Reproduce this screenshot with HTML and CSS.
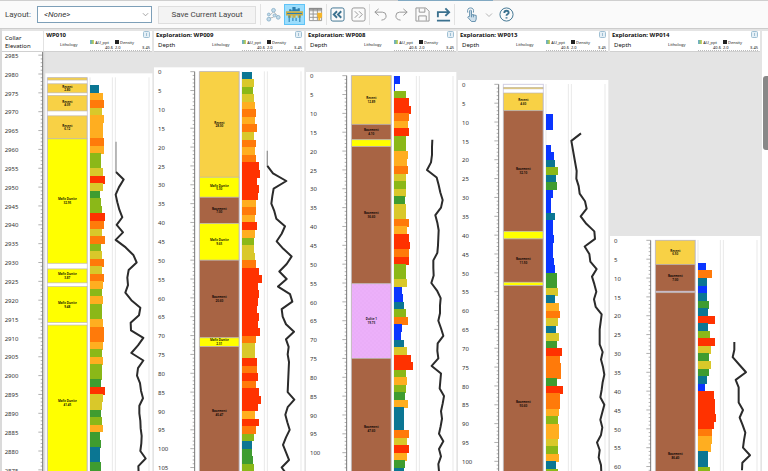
FILE: index.html
```html
<!DOCTYPE html>
<html lang="en">
<head>
<meta charset="utf-8">
<title>Drillhole Logs</title>
<link rel="stylesheet" href="styles.css">
</head>
<body>
<header class="toolbar">
  <label class="toolbar-label" for="layout">Layout:</label>
  <span class="picker">
    <select id="layout"><option>&lt;None&gt;</option></select>
    <svg class="picker-arrow" viewBox="0 0 8 5"><path d="M1 1l3 3 3-3"/></svg>
  </span>
  <button class="save-layout" type="button">Save Current Layout</button>
  <span class="rule rule-first"></span>
  <button class="tool" type="button" aria-label="Points">
    <svg viewBox="0 0 16 16"><path class="soft" d="M8 5L4 9M8 5l5 5M3 12l5-1"/><g class="dots"><circle cx="8" cy="3.500" r="2"/><circle cx="3" cy="8" r="1.500"/><circle cx="9" cy="9" r="1.500"/><circle cx="13" cy="11" r="2"/><circle cx="3" cy="13" r="2"/></g></svg>
  </button>
  <button class="tool tool-active" type="button" aria-label="Strip log">
    <svg viewBox="0 0 16 16"><path fill="#2c7fb0" d="M3 5V3h2v1h1V1h3v2h2V2h2v3z"/><path fill="#c9b04a" d="M0 5h16v4h-2v2h-3V9H9v2H6V9H5v2H2V9H0z"/><path stroke="#2c7fb0" fill="none" d="M1 7h14M3 9v6M6.500 11v3M9.500 11v3M13 9v6"/></svg>
  </button>
  <button class="tool" type="button" aria-label="Table">
    <svg viewBox="0 0 16 16"><path class="grey" d="M1.500 1.500h13v13h-13zM1.500 4h13M1.500 7.500h13M1.500 11h13M5.500 2v12M10 2v12"/><path fill="#8c8c8c" d="M1 1h14v2H1z"/><path fill="#f5b52a" d="M10 6h5v5l-2 1v2h-2v-2l-1-2z"/></svg>
  </button>
  <span class="rule"></span>
  <button class="tool" type="button" aria-label="Previous">
    <svg viewBox="0 0 16 16"><rect class="blue" x="1" y="1" width="14" height="14" rx="2"/><path class="blue bold" d="M7.500 4.500L4 8l3.500 3.500M12 4.500L8.500 8l3.500 3.500"/></svg>
  </button>
  <button class="tool" type="button" aria-label="Next">
    <svg viewBox="0 0 16 16"><rect class="grey" x="1" y="1" width="14" height="14" rx="2"/><path class="grey" d="M4 4.500L7.500 8 4 11.500M8.500 4.500L12 8l-3.500 3.500"/></svg>
  </button>
  <span class="rule"></span>
  <button class="tool" type="button" aria-label="Undo">
    <svg viewBox="0 0 16 16"><path class="grey" d="M6 2L2 5.500 6 9M2 5.500h8q4 0 4 4t-5 4.500"/></svg>
  </button>
  <button class="tool" type="button" aria-label="Redo">
    <svg viewBox="0 0 16 16"><path class="grey" d="M10 2l4 3.500L10 9M14 5.500H6q-4 0-4 4T7 14"/></svg>
  </button>
  <button class="tool" type="button" aria-label="Save">
    <svg viewBox="0 0 16 16"><path class="grey" d="M1 1h10.500L15 4.500V15H1zM4.500 1.500v4h6v-4M4 14.500v-5h8v5"/></svg>
  </button>
  <button class="tool" type="button" aria-label="Export">
    <svg viewBox="0 0 16 16"><path class="blue bold" d="M1 14.500h14M2 11V5.500h12M10 1.500l4 4-4 4"/></svg>
  </button>
  <span class="rule"></span>
  <button class="tool tool-hand" type="button" aria-label="Touch">
    <svg viewBox="0 0 16 16"><path fill="#cfe0ec" stroke="#5f8dab" d="M6 10V4q1-2 2 0v4l5 1v4l-1 2.500H8L4 11q0-1 2-1z"/><path stroke="#5f8dab" fill="none" d="M4 6q-1-5 3-5t3 5M10 8v3M8 8v3"/></svg>
  </button>
  <button class="tool tool-small" type="button" aria-label="More">
    <svg viewBox="0 0 8 8"><path class="soft" d="M1 2.500l3 3 3-3"/></svg>
  </button>
  <button class="tool" type="button" aria-label="Help">
    <svg viewBox="0 0 16 16"><circle class="blue" cx="8" cy="8" r="7"/><path class="blue bold" d="M5.700 6.300q0-2.300 2.300-2.300t2.300 2q0 1-1.300 1.700-1 .6-1 1.600M8 11v1.200"/></svg>
  </button>
  <span class="dock-edge"></span>
</header>
<main class="workspace">
  <div class="logs" id="logs"></div>
  <div class="scrollbar"><div class="thumb"></div></div>
</main>
<script src="logs.js"></script>
</body>
</html>
```
FILE: styles.css
```css
* { box-sizing: border-box; }

body {
  margin: 0;
  height: 100vh;
  display: flex;
  flex-direction: column;
  overflow: hidden;
  background: #e4e4e4;
  color: #333;
  font-family: "Noto Sans", "Open Sans", sans-serif;
}

button { margin: 0; padding: 0; font: inherit; color: inherit; }

.toolbar {
  position: relative;
  flex: none;
  display: flex;
  align-items: center;
  height: 29px;
  padding-left: 5px;
  border-top: 1px solid #cfcfcf;
  border-bottom: 1px solid #cccccc;
  background: #fafafa;
  font-family: Roboto, sans-serif;
  font-size: 8px;
}

.dock-edge {
  position: absolute;
  top: -1px;
  left: 398px;
  width: 95px;
  height: 1px;
  background: #82a9c2;
}

.toolbar-label { width: 32px; color: #444; }

.picker { position: relative; display: flex; width: 115px; height: 17px; }

.picker select {
  appearance: none;
  width: 100%;
  padding: 0 6px;
  border: 1px solid #7d9fb8;
  border-radius: 0;
  background: #fff;
  color: #333;
  font: italic 8px Roboto, sans-serif;
}

.picker-arrow {
  position: absolute;
  right: 3px;
  top: 6px;
  width: 7px;
  height: 5px;
  fill: none;
  stroke: #999;
  pointer-events: none;
}

.save-layout {
  width: 98px;
  height: 18px;
  margin-left: 6px;
  border: 1px solid #dedede;
  background: #f3f3f3;
  color: #444;
}

.rule { width: 1px; height: 21px; background: #e2e2e2; }
.rule-first { margin: 0 2px 0 4px; }

.tool {
  display: flex;
  align-items: center;
  justify-content: center;
  width: 21px;
  height: 21px;
  border: 0;
  background: none;
}

.tool svg { width: 15px; height: 15px; fill: none; }
.tool-active { border: 1px solid #5fc3f7; background: #9bddfc; }
.tool-active svg { width: 17px; height: 17px; }
.tool-hand { margin-left: 6px; }
.tool-small { width: 14px; }
.tool-small svg { width: 8px; height: 8px; }
.soft { stroke: #b5b5b5; }
.grey { stroke: #939393; fill: none; }
.blue { stroke: #3b718f; fill: none; }
.bold { stroke-width: 2; }
.dots { fill: #c5dcea; stroke: #8fb4cc; }

.workspace {
  flex: 1;
  min-height: 0;
  display: flex;
  padding-top: 2px;
  border-left: 2px solid #dadada;
}

.logs { flex: 1; display: grid; grid-template-columns: repeat(5, 1fr); align-items: start; }

.scrollbar { width: 6px; padding: 45px 0 0 1px; background: #fff; }
.thumb { height: 74px; border-radius: 3px 0 0 3px; background: #888; }

.log-head {
  display: grid;
  grid-template-columns: 44fr 42fr 24fr 36fr;
  grid-template-rows: 9px 11px;
  margin-right: 2px;
  background: #fff;
  border-bottom: 1px solid #d0d0d0;
  color: #111;
}

.log-title {
  grid-column: 1 / -1;
  display: flex;
  justify-content: space-between;
  padding: 0 2px;
  margin: 0;
  font-size: 6px;
  line-height: 8px;
  font-weight: 700;
  white-space: nowrap;
}

.with-collar .log-title { grid-column: 2 / -1; padding-left: 0; margin-left: -1px; }
.info { width: 7px; height: 7px; fill: #e4eff6; stroke: #9fbfd3; }
.axis-name { padding-left: 4px; font-size: 6px; line-height: 10px; }

.with-collar .axis-name {
  grid-row: 1 / 3;
  grid-column: 1;
  margin-right: 3px;
  padding: 3px 0 0 3px;
  border-right: 1px solid #e2e2e2;
  line-height: 8px;
}

.track-name { text-align: center; font-size: 4px; line-height: 9px; }
.legend { padding-right: 2px; font-size: 4px; line-height: 5px; white-space: nowrap; }
.legend-row { display: flex; justify-content: space-between; border-bottom: 1px dotted #bbb; line-height: 5px; }
.legend-row.end { justify-content: flex-end; }
.swatch { display: inline-block; width: 4px; height: 4px; margin-right: 1px; vertical-align: top; background: #222; }
.swatch.grade { background: linear-gradient(90deg, #6fa8e0, #7fc080, #e4d35a); }

.log-body { display: block; width: 100%; height: auto; }
.sheet { fill: #fff; }
.gutter { fill: #dedede; }
.guide { stroke: #e9e9e9; stroke-width: 3; }
.axis { stroke: #777; stroke-width: 3; fill: none; }
.axis-fine { stroke: #888; stroke-width: 2; fill: none; }
.depth { fill: #333; font-size: 18px; }
.frame { fill: #fff; stroke: #d2cfe4; stroke-width: 3; }
.unit { stroke: #bdb6b0; stroke-width: 2; }
.unit-text { fill: #000; font-size: 9px; font-weight: 600; text-anchor: middle; }
.assay { shape-rendering: crispEdges; }
.trace { fill: none; stroke: #2b2b2b; stroke-width: 6; stroke-linejoin: round; }
.trace-start { stroke: #999; stroke-width: 4; }
```
FILE: logs.js
```js
// Chart units: a log is 456 wide, three units to a pixel at the default width.
const METRE = 11.31;
const WIDTH = 456;
const HEIGHT = 1257;

const GRADES = {
  b: "#0a35ff", t: "#0b7693", g: "#3f9c30", l: "#8bb818",
  y: "#d9c82a", a: "#ffae20", o: "#ff7a0a", r: "#ff3200"
};
const ROCKS = {
  R: ["#f8d145", "Recent"], M: ["#ffff00", "Mafic Dunite"],
  B: ["#a86444", "Basement"], D: ["#ecb0fa", "Dolite 1"], L: ["#d6bdf0", ""]
};

// units: [from, to, rock, thickness label]; assay and density: one value per 2 m
const holes = [
  {
    name: "WP010", collar: 2980, zero: 66, top: 64,
    units: [[1, 1.6, "R"], [2.6, 5, "R", "2.80"], [5.7, 9.8, "R", "4.09"], [11.1, 17.2, "R", "6.12"],
      [17.2, 50.2, "M", "32.95"], [51.7, 55.4, "M", "3.87"], [56.4, 65.9, "M", "9.48"], [66.6, 108, "M", "41.45"]],
    assayFrom: 3,
    assay: "t9 a13 o14 y12 a14 a13 a13 o14 a14 l11 l11 y13 r15 y13 g10 l11 l12 r15 o14 y12 o15 l11 y12 o14 y12 o14 a13 l12 a13 l12 l12 a13 o14 o14 a13 l12 a13 l12 l12 g11 r15 y13 y12 g11 l12 a13 g10 g11 t10 t10 g11 g11",
    lead: 18, densityFrom: 26,
    density: [342, 365, 351, 341, 346, 352, 361, 344, 363, 341, 371, 394, 404, 380, 376, 378, 370, 388, 415, 411, 386, 387, 424, 408, 388, 424, 408, 405, 414, 417, 423, 412, 412, 415, 416, 419, 418, 415, 431, 409, 410]
  },
  {
    name: "Exploration: WP009", zero: 59, top: 46,
    units: [[0, 28, "R", "28.00"], [28, 33.3, "M", "5.30"], [33.3, 40.3, "B", "7.00"], [40.3, 50, "M", "9.65"],
      [50, 70.6, "B", "20.60"], [70.6, 72.9, "M", "2.31"], [72.9, 108, "B", "40.47"]],
    assayFrom: 0,
    assay: "t10 y12 l11 y12 a13 o14 a13 o15 y12 o14 a13 o14 r17 r18 r15 r17 r16 a14 o14 a13 r15 a13 l12 y12 y13 o14 r17 r20 r16 r17 r16 r15 r17 r16 r18 o14 y13 y13 r15 o15 r16 o14 r17 r19 r16 a13 r17 o14 l12 t10 g10 g11 l12 l12",
    lead: 21, densityFrom: 25,
    density: [340, 357, 397, 359, 355, 352, 361, 367, 393, 383, 368, 388, 413, 398, 376, 398, 372, 408, 415, 383, 386, 396, 420, 396, 404, 401, 405, 404, 403, 402, 401, 421, 401, 394, 400, 407, 396, 387, 396, 405, 383, 400]
  },
  {
    name: "Exploration: WP008", zero: 71, top: 60,
    units: [[0, 12.9, "R", "12.89"], [12.9, 17, "B", "4.10"], [17, 18.8, "M"], [18.8, 55.2, "B", "36.60"],
      [55.2, 75, "D", "19.73"], [75, 112.4, "B", "47.60"]],
    assayFrom: 0,
    assay: "b6 b1 l12 r15 r17 o15 a14 r15 l12 l12 a14 a13 o14 y12 l12 y12 g11 y12 y12 o15 a13 r15 r16 o15 r15 l12 l12 y13 b8 b9 t10 l12 o14 b8 b7 t10 y13 r17 r19 l12 a13 l12 g11 a14 t10 t10 t10 o15 y13 r15 a13 g11 t10",
    densityFrom: 17,
    density: [379, 378, 378, 375, 363, 392, 398, 403, 410, 405, 388, 394, 398, 397, 396, 394, 382, 382, 383, 376, 393, 404, 402, 402, 397, 405, 412, 395, 394, 397, 377, 405, 403, 401, 414, 410, 405, 408, 404, 399, 412, 399, 405, 397, 399]
  },
  {
    name: "Exploration: WP013", zero: 97, top: 84,
    units: [[0.8, 1.2, "R"], [2.3, 7, "R", "4.60"], [7, 39, "B", "32.10"], [39, 41, "M"],
      [41, 52.5, "B", "11.50"], [52.5, 53.4, "M"], [53.4, 116, "B", "50.60"]],
    assayFrom: 8,
    assay: "b7 b7 - - b5 b8 t9 l12 t10 g11 b7 b5 b5 t9 b7 b7 b8 b7 b7 b8 b9 g11 g11 y12 t9 a13 o14 y12 t10 y13 g11 r16 o14 o15 o15 g11 r17 o14 o14 a13 l12 a13 a13 y12 l12 a13 t10 l12",
    densityFrom: 13,
    density: [369, 340, 344, 348, 352, 356, 355, 362, 365, 381, 386, 368, 385, 409, 411, 380, 394, 397, 416, 402, 409, 415, 408, 413, 431, 428, 425, 425, 425, 434, 429, 435, 439, 434, 431, 427, 439, 433, 427, 433, 429, 417, 425, 422, 429, 430]
  },
  {
    name: "Exploration: WP014", zero: 565, top: 552,
    units: [[0, 6.4, "R", "6.50"], [6.4, 13.5, "B", "7.00"], [13.5, 13.9, "L"], [13.9, 100.3, "B", "86.40"]],
    assayFrom: 6,
    assay: "b8 o14 t9 b9 t9 g11 t10 r17 t10 l12 r17 y13 g11 y13 g11 t9 b7 r16 r17 r17 r18 r16 o14 a14 a13 t10 t10 l12",
    densityFrom: 27,
    density: [373, 373, 368, 388, 408, 377, 386, 386, 386, 399, 389, 398, 406, 402, 399, 420, 397, 396]
  }
];

function head(hole) {
  return `<header class="log-head${hole.collar ? " with-collar" : ""}">
    <h2 class="log-title">${hole.name}<svg class="info" viewBox="0 0 7 7"><rect x=".5" y=".5" width="6" height="6" rx="1"/><path d="M3.500 2v3"/></svg></h2>
    <div class="axis-name">${hole.collar ? "Collar<br>Elevation" : "Depth"}</div>
    <div class="track-name">Lithology</div>
    <div class="legend"><span class="swatch grade"></span>AU_ppt<div class="legend-row end">40.6</div></div>
    <div class="legend"><span class="swatch"></span>Density<div class="legend-row"><span>2.0</span><span>3.45</span></div></div>
  </header>`;
}

function ruler(hole) {
  let fine = "", labels = "";
  for (let m = hole.collar ? -5 : 0; m <= 110; m++) {
    const y = hole.zero + m * METRE;
    if (y > HEIGHT) break;
    const major = m % 5 === 0;
    fine += `M${major ? 109 : 116} ${y}H122`;
    if (major) {
      labels += `<text class="depth" x="${hole.collar ? 8 : 12}" y="${y + 8}">${hole.collar ? hole.collar - m : m}</text>`;
    }
  }
  const start = hole.collar ? 0 : hole.zero;
  return `<path class="axis-fine" d="${fine}"/><path class="axis" d="M122 ${start}V${HEIGHT}"/>${labels}`;
}

function lithology(hole) {
  const top = hole.zero + (hole.collar ? METRE : 0);
  let out = `<rect class="frame" x="136" y="${top}" width="120" height="${HEIGHT}"/>`;
  for (const [from, to, rock, size] of hole.units) {
    const y = hole.zero + from * METRE;
    const h = (to - from) * METRE;
    const [fill, label] = ROCKS[rock];
    out += `<rect class="unit" x="137" y="${y}" width="118" height="${h}" fill="${rock === "D" ? "url(#stipple)" : fill}"/>`;
    if (size) {
      const mid = y + h / 2;
      out += `<text class="unit-text" x="196" y="${mid - 2}">${label}</text><text class="unit-text" x="196" y="${mid + 9}">${size}</text>`;
    }
  }
  return out;
}

function assay(hole) {
  const bars = hole.assay.split(" ").map((sample, i) => {
    if (sample === "-") return "";
    const y = hole.zero + (hole.assayFrom + i * 2) * METRE;
    return `<rect x="264" y="${y}" width="${sample.slice(1) * 3}" height="${2 * METRE + 1}" fill="${GRADES[sample[0]]}"/>`;
  }).join("");
  return `<g class="assay">${bars}</g>`;
}

function density(hole) {
  const at = m => hole.zero + m * METRE;
  const points = hole.density.map((x, i) => `${x},${at(hole.densityFrom + i * 2)}`).join(" ");
  const lead = hole.lead
    ? `<path class="trace-start" d="M${hole.density[0]} ${at(hole.lead)}V${at(hole.densityFrom)}"/>` : "";
  return `${lead}<polyline class="trace" points="${points}"/>`;
}

function body(hole) {
  const top = hole.top;
  const collar = hole.collar
    ? `<rect class="sheet" width="125" height="${HEIGHT}"/><rect class="gutter" x="123" width="7" height="${HEIGHT}"/>` : "";
  return `<svg class="log-body" viewBox="0 0 ${WIDTH} ${HEIGHT}">
    <defs><pattern id="stipple" width="12" height="12" patternUnits="userSpaceOnUse"><rect width="12" height="12" fill="#ecb0fa"/><path fill="#d79be8" d="M2 2h2v2H2zM8 8h2v2H8z"/></pattern></defs>
    <rect class="sheet" y="${top}" width="451" height="${HEIGHT}"/>
    <path class="guide" d="M264 ${top + 12}V${HEIGHT}M331 ${top + 12}V${HEIGHT}M340 ${top + 12}V${HEIGHT}M441 ${top + 12}V${HEIGHT}"/>
    ${collar}${ruler(hole)}${lithology(hole)}${assay(hole)}${density(hole)}
  </svg>`;
}

document.getElementById("logs").innerHTML =
  holes.map(hole => `<section class="log">${head(hole)}${body(hole)}</section>`).join("");
```
